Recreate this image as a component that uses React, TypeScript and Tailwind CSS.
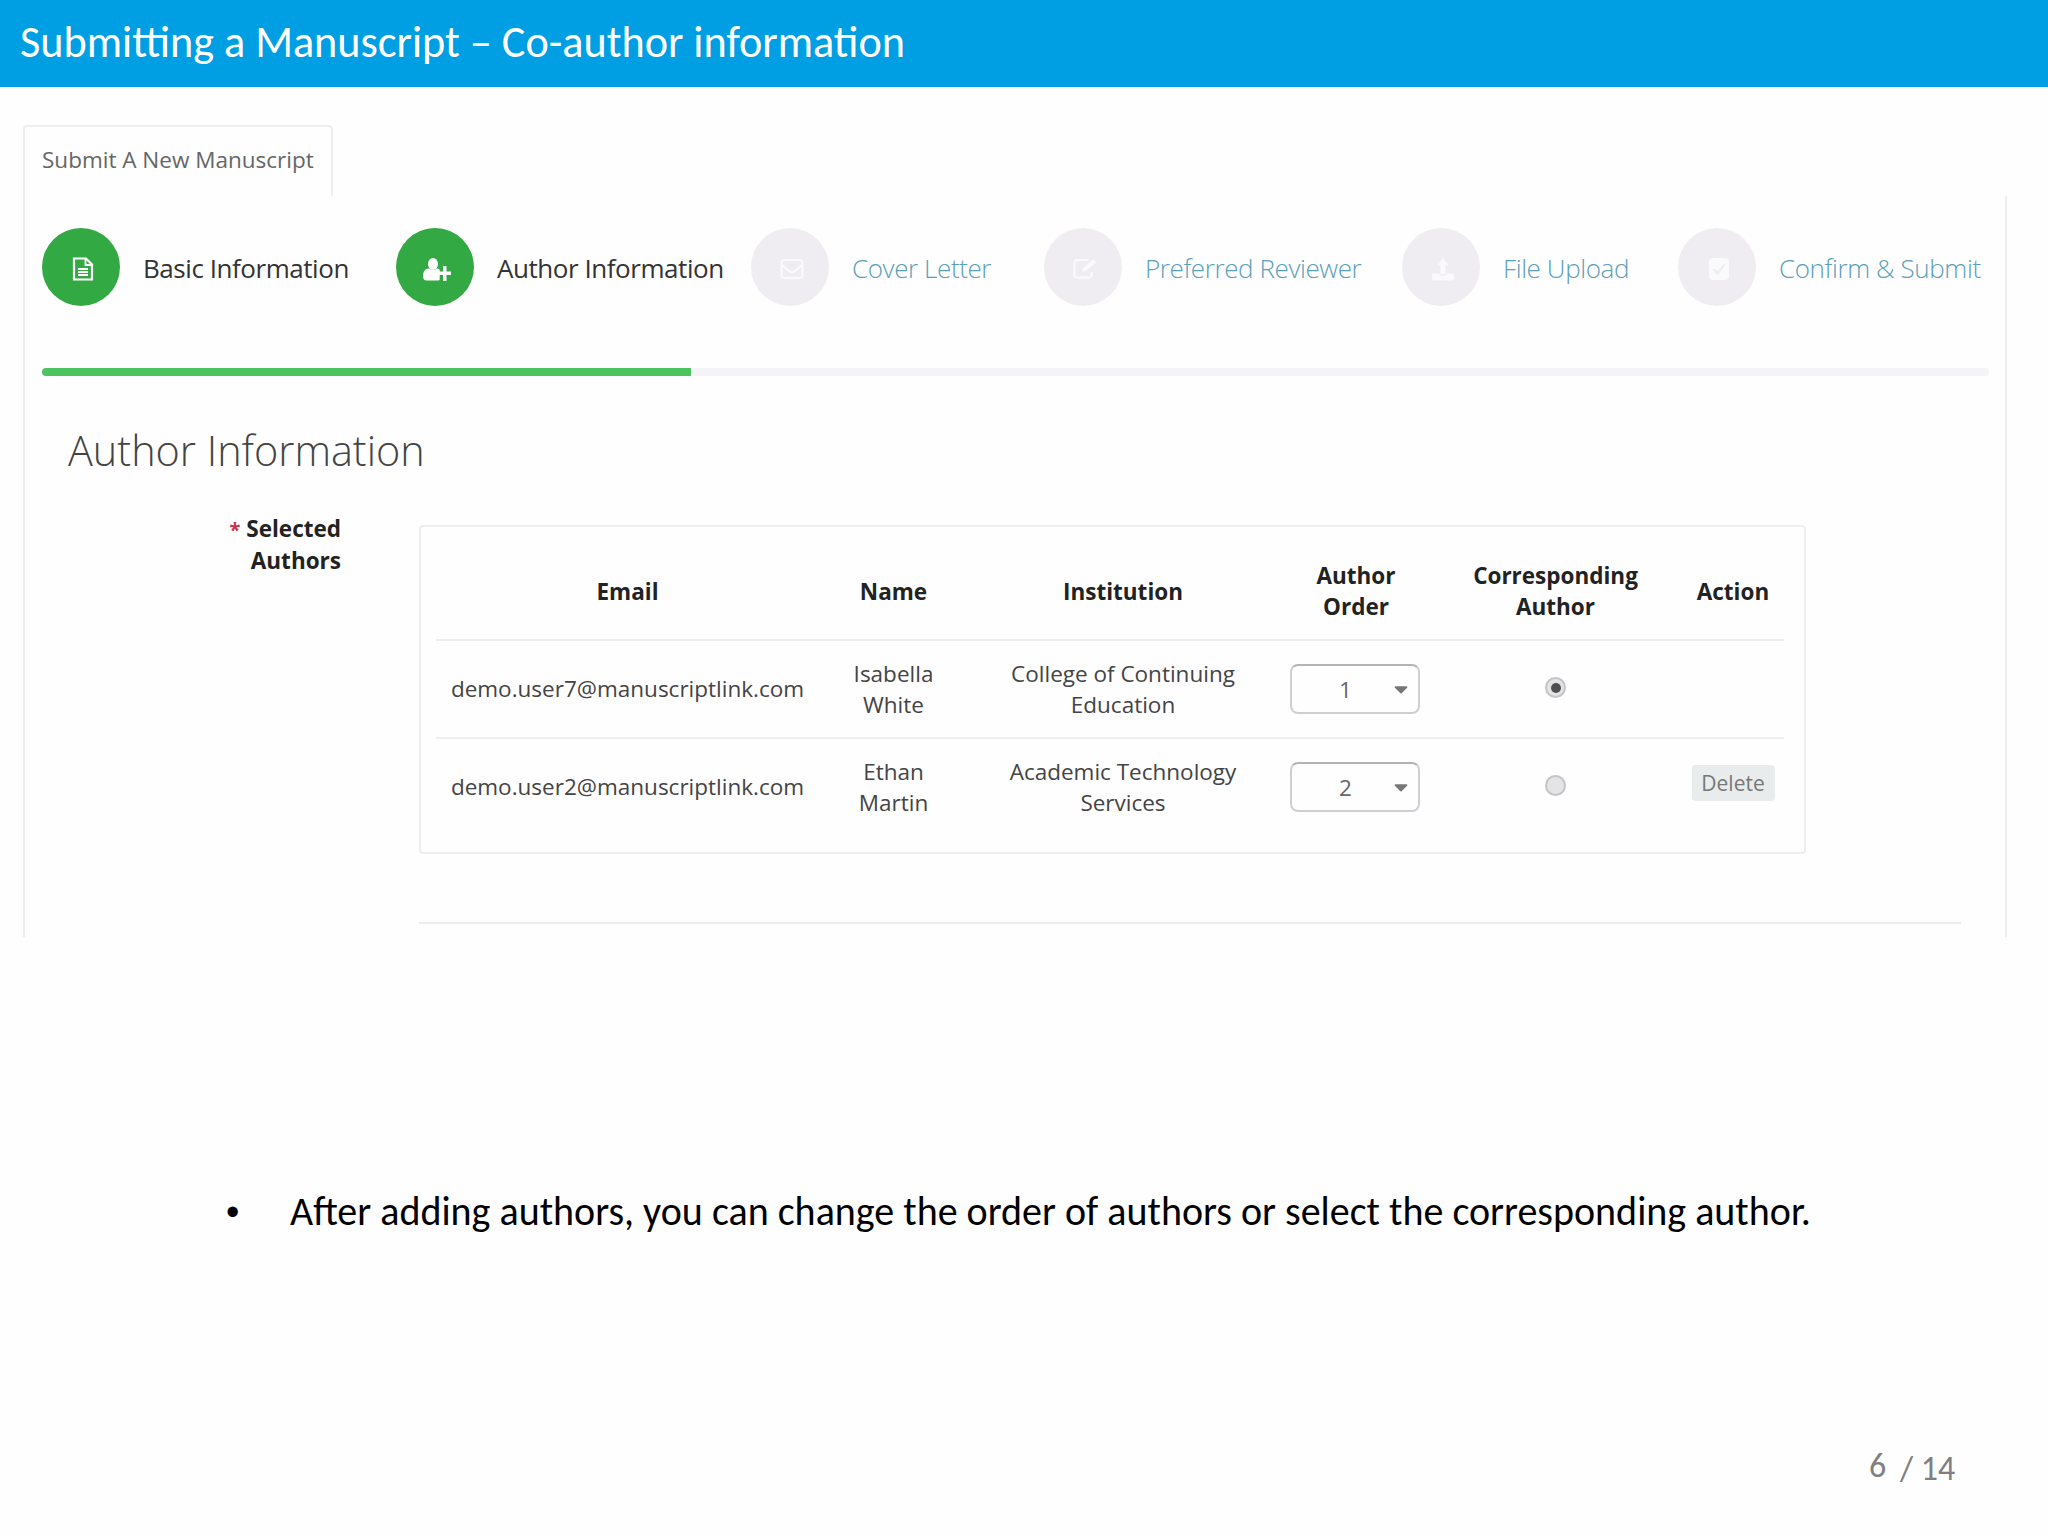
import type { ReactNode } from "react";
import { FaCaretDown } from "react-icons/fa";

type Step = { label: string; icon: ReactNode; done: boolean; cell: string };

const svg = "h-[24px] w-[24px]";

const FileIcon = () => (
  <svg viewBox="0 0 24 24" className={svg} fill="none" stroke="currentColor" strokeWidth="2.2">
    <path d="M3 1.500h12l6 6v15H3z" />
    <path d="M14.500 1.500v6.500H21M7 12h10M7 15h10M7 18h10" strokeWidth="1.800" />
  </svg>
);

const UserPlusIcon = () => (
  <svg viewBox="0 0 28 24" className="h-[24px] w-[28px]" fill="currentColor">
    <ellipse cx="10" cy="7" rx="5" ry="6" />
    <path d="M0 19c0-5 2.500-7.500 6-7.500 2.500 1.800 5.500 1.800 8 0 1 0 2 .5 2.700 1.200V22c0 1-.7 1.500-2 1.500H4C1.300 23.500 0 22 0 19z" />
    <path d="M20 9h3.500v5.500H28V18h-4.500v6H20v-6h-4.500v-3.500H20z" />
  </svg>
);

const MailIcon = () => (
  <svg viewBox="0 0 24 24" className={svg} fill="none" stroke="currentColor" strokeWidth="2.200">
    <rect x="1.500" y="3" width="21" height="18" rx="3" />
    <path d="M2 8l7 6c2 1.500 4 1.500 6 0l7-6" />
  </svg>
);

const EditIcon = () => (
  <svg viewBox="0 0 24 24" className={svg} fill="none" stroke="currentColor" strokeWidth="2.200">
    <path d="M15 3H4a2.500 2.500 0 0 0-2.500 2.500V18A2.500 2.500 0 0 0 4 20.500h12a2.500 2.500 0 0 0 2.500-2.500v-3" />
    <path d="M9 15l1-4L20 2.500 23 5.500 13 14z" fill="currentColor" stroke="none" />
  </svg>
);

const UploadIcon = () => (
  <svg viewBox="0 0 24 24" className={svg} fill="currentColor">
    <path d="M12 1l5.500 7.500h-3V17h-5V8.500h-3z" />
    <path d="M1 16.500h7c.5 1.500 2 2.500 4 2.500s3.500-1 4-2.500h7V22a1.500 1.500 0 0 1-1.500 1.500h-19A1.500 1.500 0 0 1 1 22z" />
  </svg>
);

const CheckIcon = () => (
  <svg viewBox="0 0 24 24" className={svg}>
    <rect x="2" y="1" width="20" height="22" rx="4" fill="currentColor" />
    <path d="M6.500 12l4 4.500 7-9" fill="none" stroke="#efedf1" strokeWidth="2.600" />
  </svg>
);

const STEPS: Step[] = [
  { label: "Basic Information", icon: <FileIcon />, done: true, cell: "w-[354px]" },
  { label: "Author Information", icon: <UserPlusIcon />, done: true, cell: "w-[355px]" },
  { label: "Cover Letter", icon: <MailIcon />, done: false, cell: "w-[293px]" },
  { label: "Preferred Reviewer", icon: <EditIcon />, done: false, cell: "w-[358px]" },
  { label: "File Upload", icon: <UploadIcon />, done: false, cell: "w-[276px]" },
  { label: "Confirm & Submit", icon: <CheckIcon />, done: false, cell: "w-[310px]" },
];

const AUTHORS = [
  { email: "demo.user7@manuscriptlink.com", name: ["Isabella", "White"], inst: ["College of Continuing", "Education"], order: 1 },
  { email: "demo.user2@manuscriptlink.com", name: ["Ethan", "Martin"], inst: ["Academic Technology", "Services"], order: 2 },
];

const HEADERS = [["Email"], ["Name"], ["Institution"], ["Author", "Order"], ["Corresponding", "Author"], ["Action"]];

// Email, name, institution, order, corresponding, action
const COLS = "grid grid-cols-[383px_149px_310px_156px_243px_112px] items-center text-center";

function Lines({ rows }: { rows: string[] }) {
  return (
    <div className="whitespace-nowrap">
      {rows.map((r) => (
        <div key={r}>{r}</div>
      ))}
    </div>
  );
}

export default function App() {
  return (
    <div className="h-[1536px] w-[2048px] overflow-hidden bg-[#fefefe] font-['Open_Sans',sans-serif]">
      <header className="flex h-[87px] items-center bg-[#009fe3] pb-[3px] pl-5 font-['Carlito','Lato',sans-serif] text-[44.2px] whitespace-nowrap text-white">
        <span>Submitting a Manuscript – Co-author information</span>
      </header>

      <div className="ml-[23px] pt-[38px]">
        <div className="flex h-[71px] w-[310px] items-center rounded-t border-2 border-b-0 border-[#efedf2] pb-1 pl-[17px] text-[22.5px] whitespace-nowrap text-[#666]">
          <span>Submit A New Manuscript</span>
        </div>

        <main className="h-[741px] w-[1984px] border-x-2 border-[#efedf2] pl-[17px]">
          <div className="flex h-[142px] items-center">
            {STEPS.map((s) => (
              <div key={s.label} className={`flex shrink-0 items-center ${s.cell}`}>
                <div
                  className={`flex size-[78px] shrink-0 items-center justify-center rounded-full pt-1 pl-1 ${
                    s.done ? "bg-[#33a944] text-white" : "bg-[#efedf1] text-[#faf9fb]"
                  }`}
                >
                  {s.icon}
                </div>
                <span
                  className={`ml-[23px] pt-[3px] text-[26px] whitespace-nowrap ${
                    s.done ? "tracking-[-0.45px] text-[#333]" : "font-light tracking-[-0.4px] text-[#5b9fb8]"
                  }`}
                >
                  {s.label}
                </span>
              </div>
            ))}
          </div>

          <div className="mt-[30px] h-2 w-[1947px] rounded-sm bg-[#f4f3f6]">
            <div className="h-2 w-[649px] rounded-l-sm bg-[#4cc35f]" />
          </div>

          <h1 className="mt-[45px] ml-[26px] text-[41.4px] leading-[58px] font-light whitespace-nowrap text-[#444]">
            <span>Author Information</span>
          </h1>

          <div className="mt-[34px] flex">
            <div className="w-[299px] text-right text-[22.5px] leading-[31px] font-bold text-[#222]">
              <div>
                <span className="text-[20px] text-[#c9304f]">*</span> Selected
              </div>
              <div>Authors</div>
            </div>

            <div className="mt-[12px] ml-[78px]">
              <section className="h-[329px] w-[1387px] rounded border-2 border-[#efedf2] pr-[20px] pl-[15px] text-[22.5px] leading-[31px] text-[#444]">
                <div className={`${COLS} h-[114px] border-b-2 border-[#efedf2] pt-[16px] font-bold text-[#222]`}>
                  {HEADERS.map((h) => (
                    <Lines key={h.join()} rows={h} />
                  ))}
                </div>
                {AUTHORS.map((a, i) => (
                  <div
                    key={a.email}
                    className={`${COLS} ${i === 0 ? "h-[98px] border-b-2 border-[#efedf2]" : "h-[96px]"}`}
                  >
                    <div className="pb-px whitespace-nowrap">{a.email}</div>
                    <Lines rows={a.name} />
                    <Lines rows={a.inst} />
                    <div className="ml-[12px] flex h-[50px] w-[130px] items-center justify-between rounded-lg border-2 border-[#d0ced2] border-t-[#b5b3b7] pr-2 pl-[47px] text-[#666]">
                      <span>{a.order}</span>
                      <FaCaretDown className="h-[22px] w-[18px] text-[#777]" />
                    </div>
                    <div className="mx-auto mb-[3px] flex size-[21px] items-center justify-center rounded-full border-2 border-[#c4c3c5] bg-[#e4e3e5]">
                      {i === 0 && <div className="size-[10px] rounded-full bg-[#505052]" />}
                    </div>
                    {i === 1 ? (
                      <button className="mx-auto mb-[8px] h-9 w-[83px] rounded-sm bg-[#e8ecec] text-[21px] text-[#777]">
                        Delete
                      </button>
                    ) : (
                      <div />
                    )}
                  </div>
                ))}
              </section>
              <div className="mt-[68px] h-0.5 w-[1542px] bg-[#ececef]" />
            </div>
          </div>
        </main>
      </div>

      <ul className="mt-[251px] ml-[226px] font-['Carlito','Lato',sans-serif] text-[40px] leading-[48px] whitespace-nowrap text-black">
        <li className="flex">
          <span className="w-[64px] font-['Liberation_Sans',sans-serif] text-[38px]">•</span>
          <span>After adding authors, you can change the order of authors or select the corresponding author.</span>
        </li>
      </ul>

      <footer className="mt-[210px] flex pl-[1869px] font-['Carlito','Lato',sans-serif] text-[34px] leading-[40px] text-[#808080]">
        <span className="w-[31px]">6</span>
        <span className="pt-[3px]">/ 14</span>
      </footer>
    </div>
  );
}
